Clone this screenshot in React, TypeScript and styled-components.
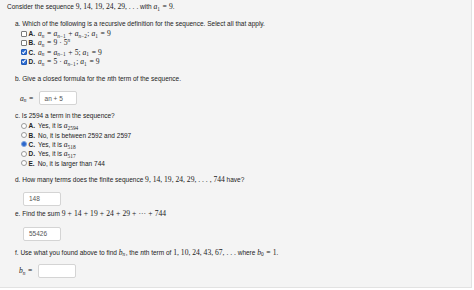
import React from "react";
import styled, { createGlobalStyle } from "styled-components";

const Global = createGlobalStyle`
  html, body { margin: 0; padding: 0; background: #ffffff; }
  body { font-family: "Liberation Sans", Arial, sans-serif; color: #222; }
`;

const Panel = styled.div`
  width: 472px;
  height: 288px;
  box-sizing: border-box;
  background: #f4f4f4;
  border-right: 1px solid #e2e2e2;
  border-bottom: 1px solid #e2e2e2;
  padding: 2px 0 0 6px;
  font-size: 6.5px;
  display: flex;
  flex-direction: column;
`;

const Part = styled.div<{ $after: number }>`
  display: flex;
  flex-direction: column;
  margin-bottom: ${(p) => p.$after}px;
`;

const Line = styled.div<{ $indent: number }>`
  height: 10px;
  line-height: 10px;
  padding-left: ${(p) => p.$indent}px;
  white-space: nowrap;
`;

const M = styled.span`
  font-family: "Liberation Serif", "Times New Roman", serif;
  font-size: 7.6px;
`;

const V = styled.i`
  font-style: italic;
`;

const Sub = styled.sub`
  font-size: 0.7em;
  vertical-align: -0.3em;
  line-height: 0;
  margin-right: 0.1em;
`;

const Sup = styled.sup`
  font-size: 0.7em;
  vertical-align: 0.5em;
  line-height: 0;
`;

const Op = styled.span`
  margin: 0 0.28em;
`;

const Options = styled.div<{ $row: number }>`
  display: flex;
  flex-direction: column;
  padding-left: 15px;
  & > * {
    height: ${(p) => p.$row}px;
  }
`;

const Option = styled.div`
  display: flex;
  align-items: center;
  white-space: nowrap;
  gap: 1.5px;
`;

const Letter = styled.b`
  font-weight: 700;
  margin-right: 1.5px;
`;

const Checkbox = styled.span<{ $on?: boolean }>`
  width: 6px;
  height: 6px;
  box-sizing: border-box;
  border: 1px solid ${(p) => (p.$on ? "#2159b5" : "#7a7a7a")};
  background: ${(p) => (p.$on ? "#2f6fd4" : "#fff")};
  border-radius: 1px;
  position: relative;
  flex: none;
  &::after {
    content: "";
    display: ${(p) => (p.$on ? "block" : "none")};
    position: absolute;
    left: 1.2px;
    top: -0.2px;
    width: 1.4px;
    height: 2.8px;
    border: solid #fff;
    border-width: 0 1px 1px 0;
    transform: rotate(40deg);
  }
`;

const Radio = styled.span<{ $on?: boolean }>`
  width: 6px;
  height: 6px;
  box-sizing: border-box;
  border-radius: 50%;
  border: 1px solid ${(p) => (p.$on ? "#7da2dc" : "#9a9a9a")};
  background: ${(p) => (p.$on ? "#2a66cc" : "#fff")};
  flex: none;
`;

const AnswerRow = styled.div<{ $top: number; $indent: number }>`
  display: flex;
  align-items: center;
  gap: 3px;
  height: 14px;
  padding-left: ${(p) => p.$indent}px;
  margin-top: ${(p) => p.$top}px;
`;

const AnswerBox = styled.div`
  width: 38px;
  height: 14px;
  box-sizing: border-box;
  border: 1px solid #d4d4d4;
  border-radius: 2px;
  background: #fff;
  color: #555;
  font-size: 6.5px;
  padding-left: 5px;
  display: flex;
  align-items: center;
`;

const an = (
  <>
    <V>a</V>
    <Sub>
      <V>n</V>
    </Sub>
  </>
);

const anm = (k: number) => (
  <>
    <V>a</V>
    <Sub>
      <V>n</V>−{k}
    </Sub>
  </>
);

const a1 = (
  <>
    <V>a</V>
    <Sub>1</Sub>
  </>
);

export default function App() {
  return (
    <>
      <Global />
      <Panel>
        <Part $after={7}>
          <Line $indent={1}>
            Consider the sequence <M>9, 14, 19, 24, 29, . . .</M> with{" "}
            <M>
              {a1}
              <Op>=</Op>9
            </M>
            .
          </Line>
        </Part>

        <Part $after={8}>
          <Line $indent={9}>
            a. Which of the following is a recursive definition for the sequence. Select all that apply.
          </Line>
          <Options $row={9.3}>
            <Option>
              <Checkbox />
              <Letter>A.</Letter>
              <M>
                {an}
                <Op>=</Op>
                {anm(1)}
                <Op>+</Op>
                {anm(2)}; {a1}
                <Op>=</Op>9
              </M>
            </Option>
            <Option>
              <Checkbox />
              <Letter>B.</Letter>
              <M>
                {an}
                <Op>=</Op>9 · 5
                <Sup>
                  <V>n</V>
                </Sup>
              </M>
            </Option>
            <Option>
              <Checkbox $on />
              <Letter>C.</Letter>
              <M>
                {an}
                <Op>=</Op>
                {anm(1)}
                <Op>+</Op>5; {a1}
                <Op>=</Op>9
              </M>
            </Option>
            <Option>
              <Checkbox $on />
              <Letter>D.</Letter>
              <M>
                {an}
                <Op>=</Op>5 · {anm(1)}; {a1}
                <Op>=</Op>9
              </M>
            </Option>
          </Options>
        </Part>

        <Part $after={6}>
          <Line $indent={9}>
            b. Give a closed formula for the{" "}
            <M>
              <V>n</V>
            </M>
            th term of the sequence.
          </Line>
          <AnswerRow $top={7} $indent={14}>
            <M>
              {an}
              <Op>=</Op>
            </M>
            <AnswerBox>an + 5</AnswerBox>
          </AnswerRow>
        </Part>

        <Part $after={7}>
          <Line $indent={9}>c. Is 2594 a term in the sequence?</Line>
          <Options $row={9.3}>
            <Option>
              <Radio />
              <Letter>A.</Letter>
              <span>
                Yes, it is{" "}
                <M>
                  <V>a</V>
                  <Sub>2594</Sub>
                </M>
              </span>
            </Option>
            <Option>
              <Radio />
              <Letter>B.</Letter>
              <span>No, it is between 2592 and 2597</span>
            </Option>
            <Option>
              <Radio $on />
              <Letter>C.</Letter>
              <span>
                Yes, it is{" "}
                <M>
                  <V>a</V>
                  <Sub>518</Sub>
                </M>
              </span>
            </Option>
            <Option>
              <Radio />
              <Letter>D.</Letter>
              <span>
                Yes, it is{" "}
                <M>
                  <V>a</V>
                  <Sub>517</Sub>
                </M>
              </span>
            </Option>
            <Option>
              <Radio />
              <Letter>E.</Letter>
              <span>No, it is larger than 744</span>
            </Option>
          </Options>
        </Part>

        <Part $after={3}>
          <Line $indent={9}>
            d. How many terms does the finite sequence <M>9, 14, 19, 24, 29, . . . , 744</M> have?
          </Line>
          <AnswerRow $top={7} $indent={17}>
            <AnswerBox>148</AnswerBox>
          </AnswerRow>
        </Part>

        <Part $after={7}>
          <Line $indent={9}>
            e. Find the sum{" "}
            <M>
              9<Op>+</Op>14<Op>+</Op>19<Op>+</Op>24<Op>+</Op>29<Op>+</Op>···<Op>+</Op>744
            </M>
          </Line>
          <AnswerRow $top={8} $indent={17}>
            <AnswerBox>55426</AnswerBox>
          </AnswerRow>
        </Part>

        <Part $after={0}>
          <Line $indent={9}>
            f. Use what you found above to find{" "}
            <M>
              <V>b</V>
              <Sub>
                <V>n</V>
              </Sub>
            </M>
            , the{" "}
            <M>
              <V>n</V>
            </M>
            th term of <M>1, 10, 24, 43, 67, . . .</M> where{" "}
            <M>
              <V>b</V>
              <Sub>0</Sub>
              <Op>=</Op>1
            </M>
            .
          </Line>
          <AnswerRow $top={6} $indent={13}>
            <M>
              <V>b</V>
              <Sub>
                <V>n</V>
              </Sub>
              <Op>=</Op>
            </M>
            <AnswerBox />
          </AnswerRow>
        </Part>
      </Panel>
    </>
  );
}
